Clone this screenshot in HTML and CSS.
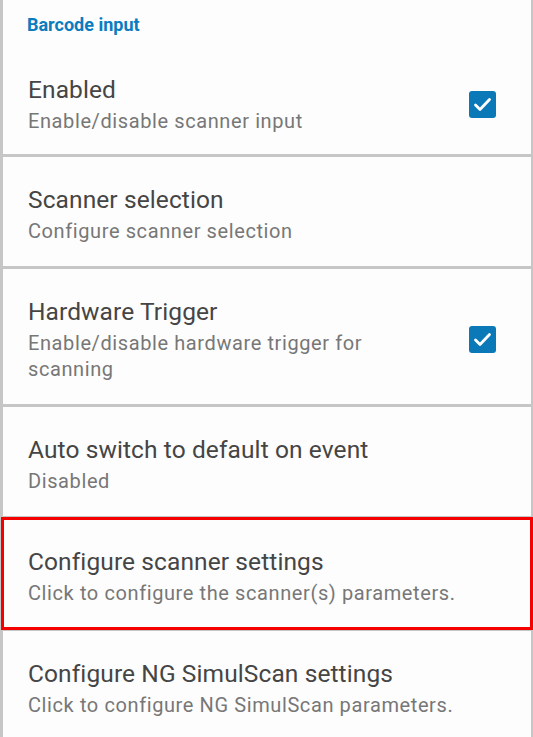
FILE: index.html
```html
<!DOCTYPE html>
<html lang="en">
<head>
  <meta charset="UTF-8">
  <meta name="viewport" content="width=device-width, initial-scale=1.0">
  <title>Barcode input</title>
  <link rel="stylesheet" href="styles.css">
</head>
<body>
  <div class="screen">
    <div class="card first">
      <h2 class="category">Barcode input</h2>
      <div class="pref">
        <div class="pref-text">
          <div class="pref-title">Enabled</div>
          <div class="pref-summary">Enable/disable scanner input</div>
        </div>
        <svg class="check" width="27" height="27" viewBox="0 0 27 27">
          <rect x="0" y="0" width="27" height="27" rx="3" fill="#0b78b8"/>
          <polyline points="6.5,14 11,18.5 20.5,8.5" fill="none" stroke="#fff" stroke-width="2.8" stroke-linecap="round" stroke-linejoin="round"/>
        </svg>
      </div>
    </div>

    <div class="card">
      <div class="pref">
        <div class="pref-text">
          <div class="pref-title">Scanner selection</div>
          <div class="pref-summary">Configure scanner selection</div>
        </div>
      </div>
    </div>

    <div class="card">
      <div class="pref">
        <div class="pref-text">
          <div class="pref-title">Hardware Trigger</div>
          <div class="pref-summary">Enable/disable hardware trigger for scanning</div>
        </div>
        <svg class="check" width="27" height="27" viewBox="0 0 27 27">
          <rect x="0" y="0" width="27" height="27" rx="3" fill="#0b78b8"/>
          <polyline points="6.5,14 11,18.5 20.5,8.5" fill="none" stroke="#fff" stroke-width="2.8" stroke-linecap="round" stroke-linejoin="round"/>
        </svg>
      </div>
    </div>

    <div class="card">
      <div class="pref">
        <div class="pref-text">
          <div class="pref-title">Auto switch to default on event</div>
          <div class="pref-summary">Disabled</div>
        </div>
      </div>
    </div>

    <div class="card highlighted">
      <div class="pref">
        <div class="pref-text">
          <div class="pref-title">Configure scanner settings</div>
          <div class="pref-summary">Click to configure the scanner(s) parameters.</div>
        </div>
      </div>
    </div>

    <div class="card">
      <div class="pref">
        <div class="pref-text">
          <div class="pref-title">Configure NG SimulScan settings</div>
          <div class="pref-summary">Click to configure NG SimulScan parameters.</div>
        </div>
      </div>
    </div>
  </div>
</body>
</html>
```

FILE: styles.css
```css
body {
  margin: 0;
  font-family: Roboto, 'Liberation Sans', sans-serif;
  background: #c6c6c6;
  overflow: hidden;
}
.screen {
  display: flex;
  flex-direction: column;
  gap: 3px;
  padding: 0 2px 0 3px;
  height: 737px;
}
.card {
  background: #fdfdfd;
  flex-shrink: 0;
}
.card.highlighted {
  outline: 3px solid #f50000;
  outline-offset: -1px;
  position: relative;
}
.category {
  margin: 0;
  padding: 13px 0 10px 24px;
  font-size: 18px;
  line-height: 24px;
  font-weight: 700;
  color: #0a7cc0;
}
.pref {
  display: flex;
  align-items: center;
  padding: 27px 35px 22px 25px;
}
.first .pref {
  padding-bottom: 20px;
}
.pref-text {
  flex: 1;
  padding-right: 20px;
}
.pref-title {
  font-size: 24.5px;
  line-height: 32px;
  letter-spacing: 0.1px;
  color: #454545;
}
.pref-summary {
  margin-top: 2px;
  font-size: 20px;
  line-height: 26px;
  letter-spacing: 0.6px;
  color: #777;
}
.check {
  display: block;
  flex-shrink: 0;
}
```
